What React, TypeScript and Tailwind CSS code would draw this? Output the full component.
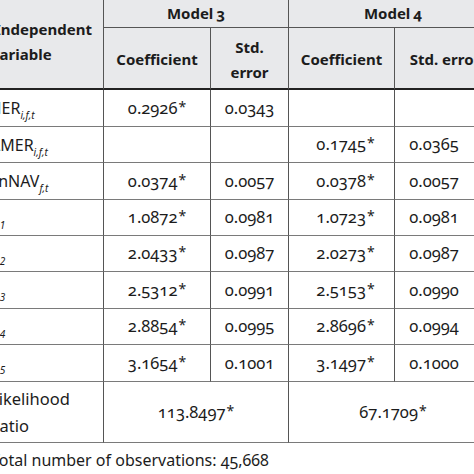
import React from "react";

const font = { fontFamily: '"Noto Sans", "Open Sans", sans-serif' };

type Row = {
  label: React.ReactNode;
  c3: string;
  s3: string;
  c4: string;
  s4: string;
  h: string;
};

const Sub = ({ children }: { children: React.ReactNode }) => (
  <span className="relative top-[5px] text-[10px] italic leading-none">{children}</span>
);

const rows: Row[] = [
  {
    label: (
      <span className="-ml-[13px]">
        MER<Sub>i,f,t</Sub>
      </span>
    ),
    c3: "0.2926*",
    s3: "0.0343",
    c4: "",
    s4: "",
    h: "h-[37px]",
  },
  {
    label: (
      <span className="-ml-[10px]">
        ΔMER<Sub>i,f,t</Sub>
      </span>
    ),
    c3: "",
    s3: "",
    c4: "0.1745*",
    s4: "0.0365",
    h: "h-[36px]",
  },
  {
    label: (
      <span className="-ml-[6px]">
        lnNAV<Sub>f,t</Sub>
      </span>
    ),
    c3: "0.0374*",
    s3: "0.0057",
    c4: "0.0378*",
    s4: "0.0057",
    h: "h-[37px]",
  },
  {
    label: (
      <span className="-ml-[12px]">
        D<Sub>1</Sub>
      </span>
    ),
    c3: "1.0872*",
    s3: "0.0981",
    c4: "1.0723*",
    s4: "0.0981",
    h: "h-[36px]",
  },
  {
    label: (
      <span className="-ml-[12px]">
        D<Sub>2</Sub>
      </span>
    ),
    c3: "2.0433*",
    s3: "0.0987",
    c4: "2.0273*",
    s4: "0.0987",
    h: "h-[36px]",
  },
  {
    label: (
      <span className="-ml-[12px]">
        D<Sub>3</Sub>
      </span>
    ),
    c3: "2.5312*",
    s3: "0.0991",
    c4: "2.5153*",
    s4: "0.0990",
    h: "h-[37px]",
  },
  {
    label: (
      <span className="-ml-[12px]">
        D<Sub>4</Sub>
      </span>
    ),
    c3: "2.8854*",
    s3: "0.0995",
    c4: "2.8696*",
    s4: "0.0994",
    h: "h-[36px]",
  },
  {
    label: (
      <span className="-ml-[12px]">
        D<Sub>5</Sub>
      </span>
    ),
    c3: "3.1654*",
    s3: "0.1001",
    c4: "3.1497*",
    s4: "0.1000",
    h: "h-[37px]",
  },
];

const Num = ({ v }: { v: string }) => {
  if (!v) return null;
  const star = v.endsWith("*");
  const base = star ? v.slice(0, -1) : v;
  return (
    <span className="oldstyle-nums">
      {base}
      {star && <span className="relative -top-[2px] text-[14px] ml-[1px]">*</span>}
    </span>
  );
};

export default function App() {
  const cell = "flex items-center justify-center border-r border-b border-[#7a7a7a] overflow-hidden";
  return (
    <div
      className="w-[474px] h-[474px] overflow-hidden bg-white text-[#1c1c1c] text-[16.5px]"
      style={font}
    >
      <div className="w-[485px] grid grid-cols-[104px_107px_78px_106px_90px]">
        {/* header */}
        <div className="row-span-2 flex flex-col justify-center bg-[#e8e9eb] border-r border-[#555] font-bold text-[15px] leading-[25px] overflow-hidden whitespace-nowrap border-b-2 border-b-[#222] pb-[4px]">
          <span className="-ml-[5px]">Independent</span>
          <span className="-ml-[9px]">variable</span>
        </div>
        <div className="col-span-2 h-[28px] flex items-center justify-center bg-[#e8e9eb] border-r border-b border-[#555] font-bold text-[15px]">
          Model <span className="oldstyle-nums ml-[3px]">3</span>
        </div>
        <div className="col-span-2 h-[28px] flex items-center justify-center bg-[#e8e9eb] border-b border-[#555] font-bold text-[15px] pl-[12px]">
          Model <span className="oldstyle-nums ml-[3px]">4</span>
        </div>
        <div className="h-[62px] flex items-center justify-center bg-[#e8e9eb] border-r border-[#555] border-b-2 border-b-[#222] font-bold text-[15px] pt-[2px]">
          Coefficient
        </div>
        <div className="h-[62px] flex flex-col items-center justify-center bg-[#e8e9eb] border-r border-[#555] border-b-2 border-b-[#222] font-bold text-[15px] leading-[25px] pt-[3px]">
          <span>Std.</span>
          <span>error</span>
        </div>
        <div className="h-[62px] flex items-center justify-center bg-[#e8e9eb] border-r border-[#555] border-b-2 border-b-[#222] font-bold text-[15px] pt-[2px]">
          Coefficient
        </div>
        <div className="h-[62px] flex items-center justify-center bg-[#e8e9eb] border-b-2 border-b-[#222] font-bold text-[15px] whitespace-nowrap pl-[10px] pt-[2px]">
          Std. error
        </div>

        {rows.map((r, i) => (
          <React.Fragment key={i}>
            <div
              className={`${r.h} flex items-center border-r border-b border-[#7a7a7a] border-r-[#555] overflow-hidden whitespace-nowrap text-[16px]`}
            >
              {r.label}
            </div>
            <div className={`${r.h} ${cell} border-r-[#555]`}>
              <Num v={r.c3} />
            </div>
            <div className={`${r.h} ${cell} border-r-[#555]`}>
              <Num v={r.s3} />
            </div>
            <div className={`${r.h} ${cell} border-r-[#555] pl-[8px]`}>
              <Num v={r.c4} />
            </div>
            <div className={`${r.h} flex items-center justify-center border-b border-[#7a7a7a] pr-[12px]`}>
              <Num v={r.s4} />
            </div>
          </React.Fragment>
        ))}

        {/* likelihood ratio */}
        <div className="h-[61px] flex flex-col justify-center border-r border-[#555] border-b border-b-[#7a7a7a] overflow-hidden whitespace-nowrap text-[16.5px] leading-[27px]">
          <span className="-ml-[10px]">Likelihood</span>
          <span className="-ml-[7px]">ratio</span>
        </div>
        <div className="col-span-2 h-[61px] flex items-center justify-center border-r border-[#555] border-b border-b-[#7a7a7a]">
          <Num v="113.8497*" />
        </div>
        <div className="col-span-2 h-[61px] flex items-center justify-center border-b border-b-[#7a7a7a] pl-[12px]">
          <Num v="67.1709*" />
        </div>
      </div>
      <div className="mt-[5px] whitespace-nowrap text-[16px]">
        <span className="-ml-[9px] inline-block">
          Total number of observations: <span className="oldstyle-nums">45,668</span>
        </span>
      </div>
    </div>
  );
}
